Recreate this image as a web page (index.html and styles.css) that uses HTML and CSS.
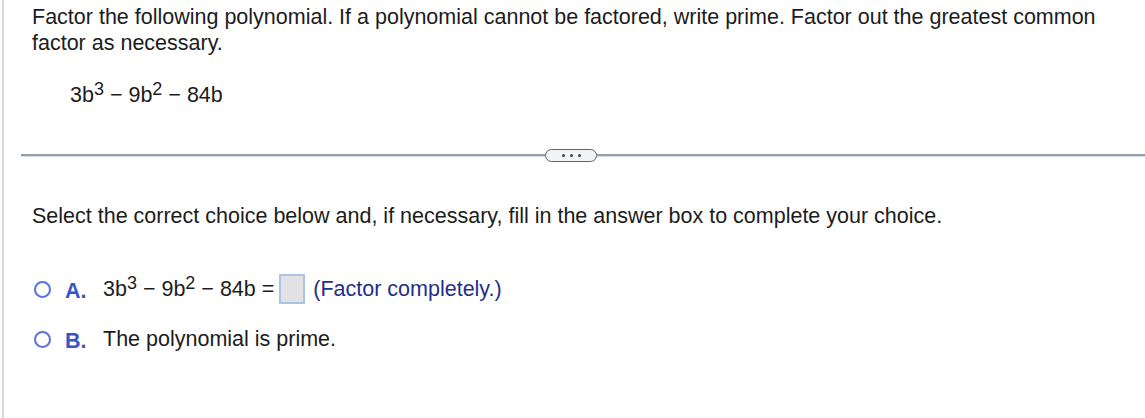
FILE: index.html
```html
<!DOCTYPE html>
<html>
<head>
<meta charset="utf-8">
<link rel="stylesheet" href="styles.css">
</head>
<body>
<div class="page">
  <div class="question">
    <p class="prompt">Factor the following polynomial. If a polynomial cannot be factored, write prime. Factor out the greatest common factor as necessary.</p>
    <div class="expr">3b<sup>3</sup> − 9b<sup>2</sup> − 84b</div>
  </div>
  <div class="divider">
    <div class="line"></div>
    <div class="more"><span></span><span></span><span></span></div>
    <div class="line"></div>
  </div>
  <p class="instr">Select the correct choice below and, if necessary, fill in the answer box to complete your choice.</p>
  <div class="choices">
    <div class="choice">
      <span class="radio"></span>
      <span class="letter">A.</span>
      <span class="ctext">3b<sup>3</sup> − 9b<sup>2</sup> − 84b =</span>
      <span class="box"></span>
      <span class="hint">(Factor completely.)</span>
    </div>
    <div class="choice">
      <span class="radio"></span>
      <span class="letter">B.</span>
      <span class="ctext">The polynomial is prime.</span>
    </div>
  </div>
</div>
</body>
</html>
```

FILE: styles.css
```css
html, body {
  margin: 0;
  padding: 0;
  background: #fff;
}
body {
  font-family: "Liberation Sans", Arial, sans-serif;
  color: #1c1c1c;
  font-size: 21.5px;
}
.page {
  margin-left: 2px;
  border-left: 2px solid #d3d7de;
  height: 418px;
  box-sizing: border-box;
  padding-top: 4px;
}
.question {
  padding-left: 28px;
  padding-right: 20px;
}
.prompt {
  margin: 0;
  line-height: 26px;
}
.expr {
  margin-top: 26px;
  padding-left: 38px;
  line-height: 26px;
}
sup {
  font-size: 18px;
  line-height: 0;
  vertical-align: 7px;
}
.divider {
  display: flex;
  align-items: center;
  margin-top: 41px;
  margin-left: 17px;
}
.line {
  height: 2px;
  background: #959dab;
  border-bottom: 1px solid #d9dde3;
  flex: 1;
}
.line:first-child {
  flex: 0 0 524px;
}
.more {
  width: 50px;
  height: 11px;
  border: 1.5px solid #5a6476;
  border-radius: 8px;
  background: #f3f4f7;
  display: flex;
  justify-content: center;
  align-items: center;
  gap: 5px;
}
.more span {
  width: 3px;
  height: 3px;
  border-radius: 50%;
  background: #3d4656;
}
.instr {
  margin: 41px 0 0 28px;
  line-height: 26px;
}
.choices {
  margin-top: 45px;
  padding-left: 30px;
}
.choice {
  display: flex;
  align-items: center;
  height: 30px;
}
.choice + .choice {
  margin-top: 20px;
}
.radio {
  width: 17px;
  height: 17px;
  border: 2px solid #5b74d6;
  border-radius: 50%;
  box-sizing: border-box;
  box-shadow: 0 0 1px rgba(91,116,214,0.4);
  margin-right: 14px;
  margin-top: 1px;
}
.letter {
  color: #3a56c5;
  font-weight: bold;
  width: 38px;
  margin-top: 4px;
}
.ctext {
  color: #1c1c1c;
}
.box {
  width: 22px;
  height: 26px;
  background: #e2e2e2;
  border: 2px solid #a9c4e6;
  margin-left: 5px;
  margin-right: 8px;
}
.hint {
  color: #1f2f8a;
}
```
